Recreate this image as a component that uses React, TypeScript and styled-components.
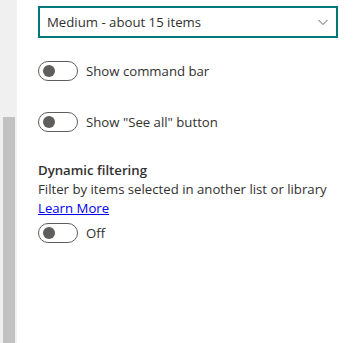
import React from 'react';
import styled, { createGlobalStyle } from 'styled-components';

const GlobalStyle = createGlobalStyle`
  html, body {
    margin: 0;
    padding: 0;
    background: #ffffff;
  }
  body {
    font-family: 'Open Sans', 'Noto Sans', 'Liberation Sans', sans-serif;
    color: #323130;
  }
`;

const Page = styled.div`
  display: flex;
  width: 358px;
  height: 343px;
  overflow: hidden;
`;

const ScrollTrack = styled.div`
  width: 17px;
  flex-shrink: 0;
  background: #f0f0f0;
  display: flex;
  flex-direction: column;
  padding-top: 117px;
  box-sizing: border-box;
`;

const ScrollThumb = styled.div`
  flex: 1;
  margin: 0 2px 0 3px;
  background: #c1c1c1;
`;

const Content = styled.div`
  flex: 1;
  padding: 6px 0 0 21px;
  display: flex;
  flex-direction: column;
  font-size: 13.2px;
`;

const Dropdown = styled.div`
  box-sizing: border-box;
  width: 300px;
  height: 32px;
  border: 2px solid #03787c;
  display: flex;
  align-items: center;
  justify-content: space-between;
  padding: 0 7px 0 7px;
  color: #323130;
`;

const ToggleRow = styled.div<{ $top: number }>`
  display: flex;
  align-items: center;
  gap: 8px;
  margin-top: ${(p) => p.$top}px;
  height: 20px;
`;

const Toggle = styled.div`
  box-sizing: border-box;
  width: 40px;
  height: 20px;
  border: 1px solid #605e5c;
  border-radius: 10px;
  display: flex;
  align-items: center;
  padding-left: 4px;
  &::after {
    content: '';
    width: 12px;
    height: 12px;
    border-radius: 50%;
    background: #605e5c;
  }
`;

const Heading = styled.div`
  margin-top: 29px;
  font-weight: 600;
  line-height: 19px;
`;

const Text = styled.div`
  line-height: 19px;
`;

const Link = styled.a`
  line-height: 19px;
  color: #0000ee;
  text-decoration: underline;
  align-self: flex-start;
`;

const Chevron = () => (
  <svg width="12" height="12" viewBox="0 0 12 12" fill="none">
    <path d="M1.5 4 L6 8.5 L10.5 4" stroke="#605e5c" strokeWidth="1" />
  </svg>
);

export default function App() {
  return (
    <>
      <GlobalStyle />
      <Page>
        <ScrollTrack>
          <ScrollThumb />
        </ScrollTrack>
        <Content>
          <Dropdown>
            <span>Medium - about 15 items</span>
            <Chevron />
          </Dropdown>
          <ToggleRow $top={23}>
            <Toggle />
            <span>Show command bar</span>
          </ToggleRow>
          <ToggleRow $top={31}>
            <Toggle />
            <span>Show "See all" button</span>
          </ToggleRow>
          <Heading>Dynamic filtering</Heading>
          <Text>Filter by items selected in another list or library</Text>
          <Link href="#">Learn More</Link>
          <ToggleRow $top={5}>
            <Toggle />
            <span>Off</span>
          </ToggleRow>
        </Content>
      </Page>
    </>
  );
}
